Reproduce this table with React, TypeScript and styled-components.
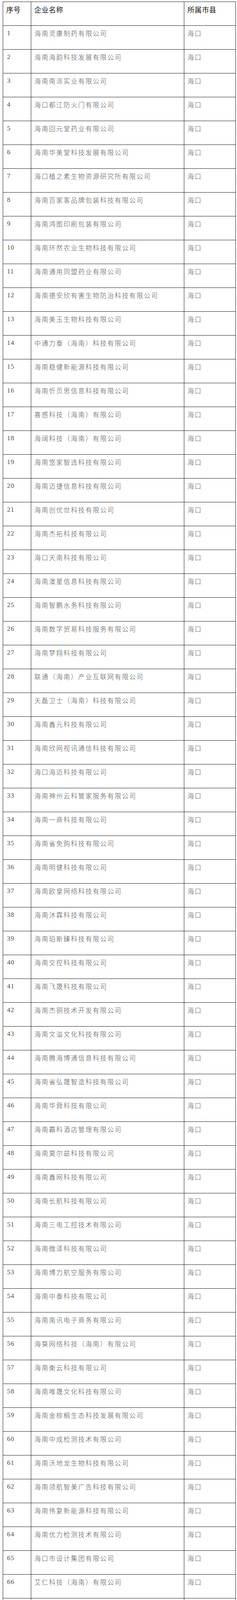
import React from "react";
import styled, { createGlobalStyle } from "styled-components";

const GlobalStyle = createGlobalStyle`
  html, body {
    margin: 0;
    padding: 0;
    background: #ffffff;
  }
  body {
    font-family: "Liberation Serif", "Noto Sans CJK SC", serif;
  }
`;

type Row = [string, string];

const rows: Row[] = [
  ["海南灵康制药有限公司", "海口"],
  ["海南海韵科技发展有限公司", "海口"],
  ["海南南派实业有限公司", "海口"],
  ["海口都江防火门有限公司", "海口"],
  ["海南回元堂药业有限公司", "海口"],
  ["海南华美堂科技发展有限公司", "海口"],
  ["海口植之素生物资源研究所有限公司", "海口"],
  ["海南百家客品牌包装科技有限公司", "海口"],
  ["海南鸿图印刷包装有限公司", "海口"],
  ["海南环然农业生物科技有限公司", "海口"],
  ["海南通用同盟药业有限公司", "海口"],
  ["海南德安欣有害生物防治科技有限公司", "海口"],
  ["海南美玉生物科技有限公司", "海口"],
  ["中通力泰（海南）科技有限公司", "海口"],
  ["海南稳健新能源科技有限公司", "海口"],
  ["海南忻页思信息科技有限公司", "海口"],
  ["喜感科技（海南）有限公司", "海口"],
  ["海阔科技（海南）有限公司", "海口"],
  ["海南悠家智选科技有限公司", "海口"],
  ["海南迈捷信息科技有限公司", "海口"],
  ["海南创优世科技有限公司", "海口"],
  ["海南杰拓科技有限公司", "海口"],
  ["海口天南科技有限公司", "海口"],
  ["海南澳星信息科技有限公司", "海口"],
  ["海南智鹏水务科技有限公司", "海口"],
  ["海南数字贸易科技服务有限公司", "海口"],
  ["海南梦翔科技有限公司", "海口"],
  ["联通（海南）产业互联网有限公司", "海口"],
  ["天磊卫士（海南）科技有限公司", "海口"],
  ["海南鑫元科技有限公司", "海口"],
  ["海南欣网视讯通信科技有限公司", "海口"],
  ["海口海迈科技有限公司", "海口"],
  ["海南神州云科管家服务有限公司", "海口"],
  ["海南一商科技有限公司", "海口"],
  ["海南省免购科技有限公司", "海口"],
  ["海南明健科技有限公司", "海口"],
  ["海南欧皇网络科技有限公司", "海口"],
  ["海南沐霖科技有限公司", "海口"],
  ["海南珀斯臻科技有限公司", "海口"],
  ["海南交控科技有限公司", "海口"],
  ["海南飞晟科技有限公司", "海口"],
  ["海南杰铜技术开发有限公司", "海口"],
  ["海南文溢文化科技有限公司", "海口"],
  ["海南腾海博通信息科技有限公司", "海口"],
  ["海南省弘晟智造科技有限公司", "海口"],
  ["海南华舜科技有限公司", "海口"],
  ["海南霸科酒店管理有限公司", "海口"],
  ["海南莫尔兹科技有限公司", "海口"],
  ["海南鑫网科技有限公司", "海口"],
  ["海南长航科技有限公司", "海口"],
  ["海南三电工控技术有限公司", "海口"],
  ["海南微泽科技有限公司", "海口"],
  ["海南博力航空服务有限公司", "海口"],
  ["海南中泰科技有限公司", "海口"],
  ["海南南讯电子商务有限公司", "海口"],
  ["海葵网络科技（海南）有限公司", "海口"],
  ["海南衡云科技有限公司", "海口"],
  ["海南唯晟文化科技有限公司", "海口"],
  ["海南金棕榈生态科技发展有限公司", "海口"],
  ["海南中成检测技术有限公司", "海口"],
  ["海南沃地龙生物科技有限公司", "海口"],
  ["海南领航智美广告科技有限公司", "海口"],
  ["海南伟复新能源科技有限公司", "海口"],
  ["海南优力检测技术有限公司", "海口"],
  ["海口市设计集团有限公司", "海口"],
  ["艾仁科技（海南）有限公司", "海口"],
  ["海南俊琳文心建筑科技有限公司", "海口"],
  ["海南四方圆温室材料有限公司", "海口"],
  ["海南弗佑生态环境科技有限责任公司", "海口"],
  ["海口锦瑞富仁危险品运输有限公司", "海口"],
  ["海南蓝冠环保节能科技有限公司", "海口"],
  ["海南微氪新材料科技有限公司", "海口"],
  ["海南冠泓工程勘察设计有限公司", "海口"],
  ["海南电力产业发展有限责任公司", "海口"],
  ["海南海诺能源科技有限公司", "海口"],
  ["海南美润环境工程有限公司", "海口"],
  ["中生源（海南）生态环境发展有限公司", "海口"],
  ["小唐茶（海南）科技有限公司", "海口"],
  ["海南省登记结算有限责任公司", "海口"],
  ["海南启星生物科技有限公司", "三亚"],
  ["海南神州泰岳软件有限公司", "三亚"],
  ["海南伊跑科技有限公司", "三亚"],
  ["三亚九乾信息技术有限公司", "三亚"],
  ["海南海之悦信息技术有限公司", "三亚"],
  ["海南展梦星程科技有限公司", "三亚"],
  ["慧诺云谱（海南）科技有限公司", "三亚"],
  ["海南都广科技有限公司", "三亚"],
  ["真数科技（三亚）有限公司", "三亚"],
  ["三亚尹口科技有限公司", "三亚"],
  ["三亚黑海科技有限公司", "三亚"],
  ["海南福港远洋渔业有限公司", "三亚"],
  ["海南金烁科技有限公司", "三亚"],
  ["海南狮子鱼深海技术有限公司", "三亚"],
  ["海南金悦安数字科技有限公司", "三亚"],
  ["海南国农玖玖生物科技有限公司", "三亚"],
  ["未米生物科技（海南）有限公司", "三亚"],
  ["海南华诚测绘科技有限公司", "三亚"],
  ["北京同仁堂（海南）控股有限公司", "三亚"],
  ["赛信（海南）生物科技有限公司", "三亚"],
  ["量势新能源科技（三亚）有限公司", "三亚"],
  ["三沙美济渔业开发有限公司", "三沙"],
  ["儋州金溢橡胶产业服务有限公司", "儋州"],
  ["海南东起物流有限公司", "儋州"],
  ["海南鑫亚特建设工程有限公司", "儋州"],
  ["溪地阳光（海南）生物科技有限公司", "万宁"],
  ["万宁市海建装配式建筑工程有限公司", "万宁"],
  ["正大（海南）兴隆咖啡产业开发有限公司", "万宁"],
  ["五指山妙自然茶业有限公司", "五指山"],
  ["五指山苗绿香茶业专业合作社", "五指山"],
  ["海南金岛庄园生态农业开发有限公司", "乐东"],
  ["乐东普英洲花卉园艺有限公司", "乐东"],
  ["国家能源集团乐东发电有限公司", "乐东"],
  ["海南昆仑集团有限公司", "澄迈"],
  ["海南太和线缆有限公司", "澄迈"],
  ["中亿装配式钢结构（海南）有限公司", "澄迈"],
  ["海南海亿天成钢结构有限责任公司", "澄迈"],
  ["海南泽霖科技发展有限公司", "澄迈"],
  ["海南美佳达建筑节能科技有限公司", "澄迈"],
  ["海泰科技（海南）有限公司", "澄迈"],
  ["海南星语信息技术有限公司", "澄迈"],
  ["海南博高物联科技有限公司", "澄迈"],
  ["海南甜柚网络科技有限公司", "澄迈"],
  ["海南招盟网络技术有限公司", "澄迈"],
  ["海南瑞思信息科技有限责任公司", "陵水"],
  ["海南辉腾农业开发有限公司", "保亭"],
  ["保亭宇图地理信息工程有限公司", "保亭"],
  ["海南原海高慧科技有限公司", "保亭"],
  ["海南万安农业开发有限公司", "琼中"],
  ["快乐的蛋（海南）农业发展有限公司", "白沙"],
];

const Page = styled.div`
  padding: 4px 4px 0 7px;
  background: #ffffff;
`;

const Table = styled.table`
  border-collapse: collapse;
  width: 596px;
  table-layout: fixed;
  border: 1px solid #1c1c1c;
`;

const Col = styled.col<{ $w: number }>`
  width: ${(p) => p.$w}px;
`;

const Tr = styled.tr`
  height: 61px;
`;

const HeadCell = styled.th`
  border: 1px solid #1c1c1c;
  padding: 7px 6px 0 8px;
  vertical-align: top;
  text-align: left;
  font-family: "Noto Sans CJK SC", "Liberation Sans", sans-serif;
  font-weight: 400;
  font-size: 18px;
  line-height: 24px;
  letter-spacing: 0.6px;
  color: #151515;
  white-space: nowrap;
`;

const NumCell = styled.td`
  border: 1px solid #1c1c1c;
  padding: 8px 6px 0 10px;
  vertical-align: top;
  font-family: "Liberation Serif", "Noto Sans CJK SC", serif;
  font-size: 17px;
  line-height: 22px;
  letter-spacing: 1px;
  color: #4d4d4d;
`;

const TextCell = styled.td`
  border: 1px solid #1c1c1c;
  padding: 8px 4px 0 8px;
  vertical-align: top;
  font-family: "Noto Sans CJK SC", sans-serif;
  font-weight: 300;
  font-size: 16.5px;
  line-height: 22px;
  letter-spacing: 2.2px;
  color: #585858;
  white-space: nowrap;
  overflow: hidden;
`;

export default function App() {
  return (
    <>
      <GlobalStyle />
      <Page>
        <Table>
          <colgroup>
            <Col $w={72} />
            <Col $w={392} />
            <Col $w={132} />
          </colgroup>
          <thead>
            <Tr>
              <HeadCell>序号</HeadCell>
              <HeadCell>企业名称</HeadCell>
              <HeadCell>所属市县</HeadCell>
            </Tr>
          </thead>
          <tbody>
            {rows.map(([name, city], i) => (
              <Tr key={i}>
                <NumCell>{i + 1}</NumCell>
                <TextCell>{name}</TextCell>
                <TextCell>{city}</TextCell>
              </Tr>
            ))}
          </tbody>
        </Table>
      </Page>
    </>
  );
}
